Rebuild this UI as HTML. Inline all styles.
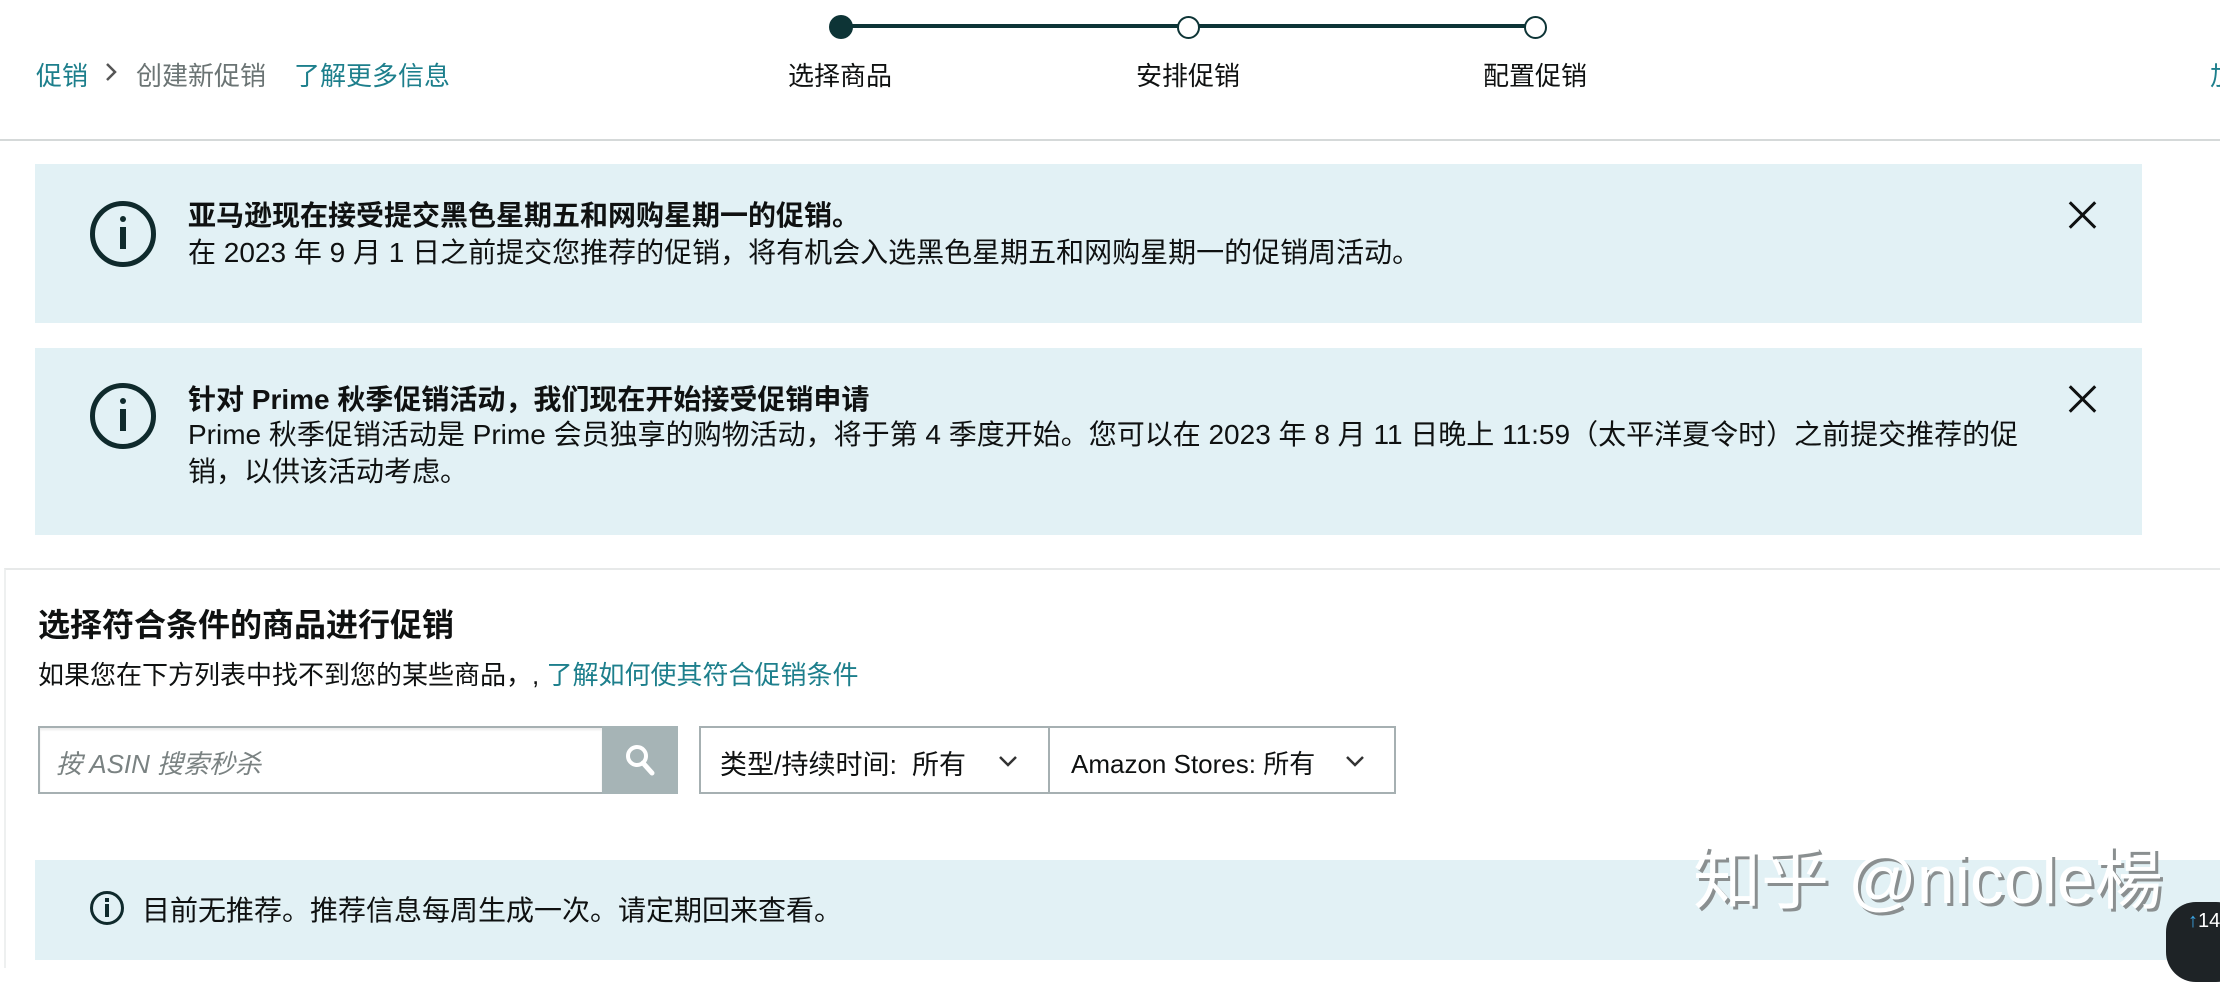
<!DOCTYPE html>
<html><head><meta charset="utf-8"><style>
*{margin:0;padding:0;box-sizing:border-box}
body{width:2220px;height:958px;overflow:hidden;background:#fff;font-family:"Liberation Sans","Noto Sans CJK SC",sans-serif;color:#0f1111;position:relative}
.a{position:absolute;white-space:nowrap}
.teal{color:#1d7f8c}
.banner{position:absolute;left:35px;width:2107px;background:#e2f1f5}
.ic{position:absolute;width:66px;height:66px;border:5px solid #0f2a2c;border-radius:50%}
.ic:before{content:"";position:absolute;left:25px;top:10px;width:6px;height:6px;background:#0f2a2c;border-radius:50%}
.ic:after{content:"";position:absolute;left:25px;top:21px;width:6px;height:22px;background:#0f2a2c}
.x{position:absolute;width:30px;height:30px}
.x:before,.x:after{content:"";position:absolute;left:13px;top:-3px;width:3px;height:36px;background:#0f1111;transform:rotate(45deg)}
.x:after{transform:rotate(-45deg)}
</style></head><body>
<!-- header -->
<div class="a teal" style="left:36px;top:56px;font-size:26px">促销</div>
<svg class="a" style="left:104px;top:62px" width="14" height="20"><path d="M3 2 L11 10 L3 18" fill="none" stroke="#555" stroke-width="2.5"/></svg>
<div class="a" style="left:136px;top:56px;font-size:26px;color:#6b7474">创建新促销</div>
<div class="a teal" style="left:294px;top:56px;font-size:26px">了解更多信息</div>
<div class="a" style="left:842px;top:24px;width:694px;height:4px;background:#0d3436"></div>
<div class="a" style="left:829px;top:15px;width:24px;height:24px;border-radius:50%;background:#0d3436"></div>
<div class="a" style="left:1177px;top:16px;width:23px;height:23px;border-radius:50%;background:#fff;border:2px solid #0d3436"></div>
<div class="a" style="left:1524px;top:16px;width:23px;height:23px;border-radius:50%;background:#fff;border:2px solid #0d3436"></div>
<div class="a" style="left:788px;top:56px;font-size:26px">选择商品</div>
<div class="a" style="left:1136px;top:56px;font-size:26px">安排促销</div>
<div class="a" style="left:1483px;top:56px;font-size:26px">配置促销</div>
<div class="a teal" style="left:2210px;top:56px;font-size:26px">加</div>
<div class="a" style="left:0;top:139px;width:2220px;height:2px;background:#d5d9d9"></div>
<!-- banner 1 -->
<div class="banner" style="top:164px;height:159px"></div>
<div class="ic" style="left:90px;top:201px"></div>
<div class="a" style="left:188px;top:194px;font-size:28px;font-weight:bold">亚马逊现在接受提交黑色星期五和网购星期一的促销。</div>
<div class="a" style="left:188px;top:231px;font-size:28px">在 2023 年 9 月 1 日之前提交您推荐的促销，将有机会入选黑色星期五和网购星期一的促销周活动。</div>
<div class="x" style="left:2068px;top:200px"></div>
<!-- banner 2 -->
<div class="banner" style="top:348px;height:187px"></div>
<div class="ic" style="left:90px;top:383px"></div>
<div class="a" style="left:188px;top:378px;font-size:28px;font-weight:bold">针对 Prime 秋季促销活动，我们现在开始接受促销申请</div>
<div class="a" style="left:188px;top:413px;font-size:28px">Prime 秋季促销活动是 Prime 会员独享的购物活动，将于第 4 季度开始。您可以在 2023 年 8 月 11 日晚上 11:59（太平洋夏令时）之前提交推荐的促</div>
<div class="a" style="left:188px;top:450px;font-size:28px">销，以供该活动考虑。</div>
<div class="x" style="left:2068px;top:384px"></div>
<!-- card -->
<div class="a" style="left:4px;top:568px;width:2216px;height:400px;border-top:2px solid #e7e9e9;border-left:2px solid #eef0f0"></div>
<div class="a" style="left:38px;top:600px;font-size:32px;font-weight:bold">选择符合条件的商品进行促销</div>
<div class="a" style="left:38px;top:655px;font-size:26px">如果您在下方列表中找不到您的某些商品，, <span class="teal">了解如何使其符合促销条件</span></div>
<div class="a" style="left:38px;top:726px;width:564px;height:68px;border:2px solid #a6b0b2;border-right:none;box-shadow:inset 0 2px 2px rgba(0,0,0,.08)"></div>
<div class="a" style="left:56px;top:744px;font-size:26px;color:#7a8282;font-style:italic">按 ASIN 搜索秒杀</div>
<div class="a" style="left:602px;top:726px;width:76px;height:68px;background:#a6b4b6"></div>
<svg class="a" style="left:622px;top:742px" width="36" height="36" viewBox="0 0 36 36"><circle cx="15" cy="14" r="9" fill="none" stroke="#fff" stroke-width="4"/><path d="M21 21 L30 31" stroke="#fff" stroke-width="5" stroke-linecap="round"/></svg>
<div class="a" style="left:699px;top:726px;width:697px;height:68px;border:2px solid #a6b0b2"></div>
<div class="a" style="left:1048px;top:726px;width:2px;height:68px;background:#a6b0b2"></div>
<div class="a" style="left:720px;top:743px;font-size:27px">类型/持续时间:&nbsp; 所有</div>
<svg class="a" style="left:998px;top:754px" width="20" height="14"><path d="M2 3 L10 11 L18 3" fill="none" stroke="#333" stroke-width="2.5"/></svg>
<div class="a" style="left:1071px;top:744px;font-size:26px">Amazon Stores: 所有</div>
<svg class="a" style="left:1345px;top:754px" width="20" height="14"><path d="M2 3 L10 11 L18 3" fill="none" stroke="#333" stroke-width="2.5"/></svg>
<!-- bottom banner -->
<div class="a" style="left:35px;top:860px;width:2185px;height:100px;background:#e2f1f5"></div>
<div class="a" style="left:90px;top:891px;width:34px;height:34px;border:3px solid #0f2a2c;border-radius:50%"></div>
<div class="a" style="left:105px;top:898px;width:4px;height:4px;background:#0f2a2c"></div>
<div class="a" style="left:105px;top:904px;width:4px;height:13px;background:#0f2a2c"></div>
<div class="a" style="left:142px;top:889px;font-size:28px">目前无推荐。推荐信息每周生成一次。请定期回来查看。</div>
<div class="a" style="left:1693px;top:824px;font-size:68px;color:#fff;text-shadow:3px 3px 0 #8a8f90">知乎 @nicole楊</div>
<div class="a" style="left:2166px;top:902px;width:80px;height:80px;border-radius:30px;background:#1e2326"></div>
<div class="a" style="left:2188px;top:910px;font-size:20px;color:#fff"><span style="color:#3aa7e8">↑</span>14</div>
</body></html>
